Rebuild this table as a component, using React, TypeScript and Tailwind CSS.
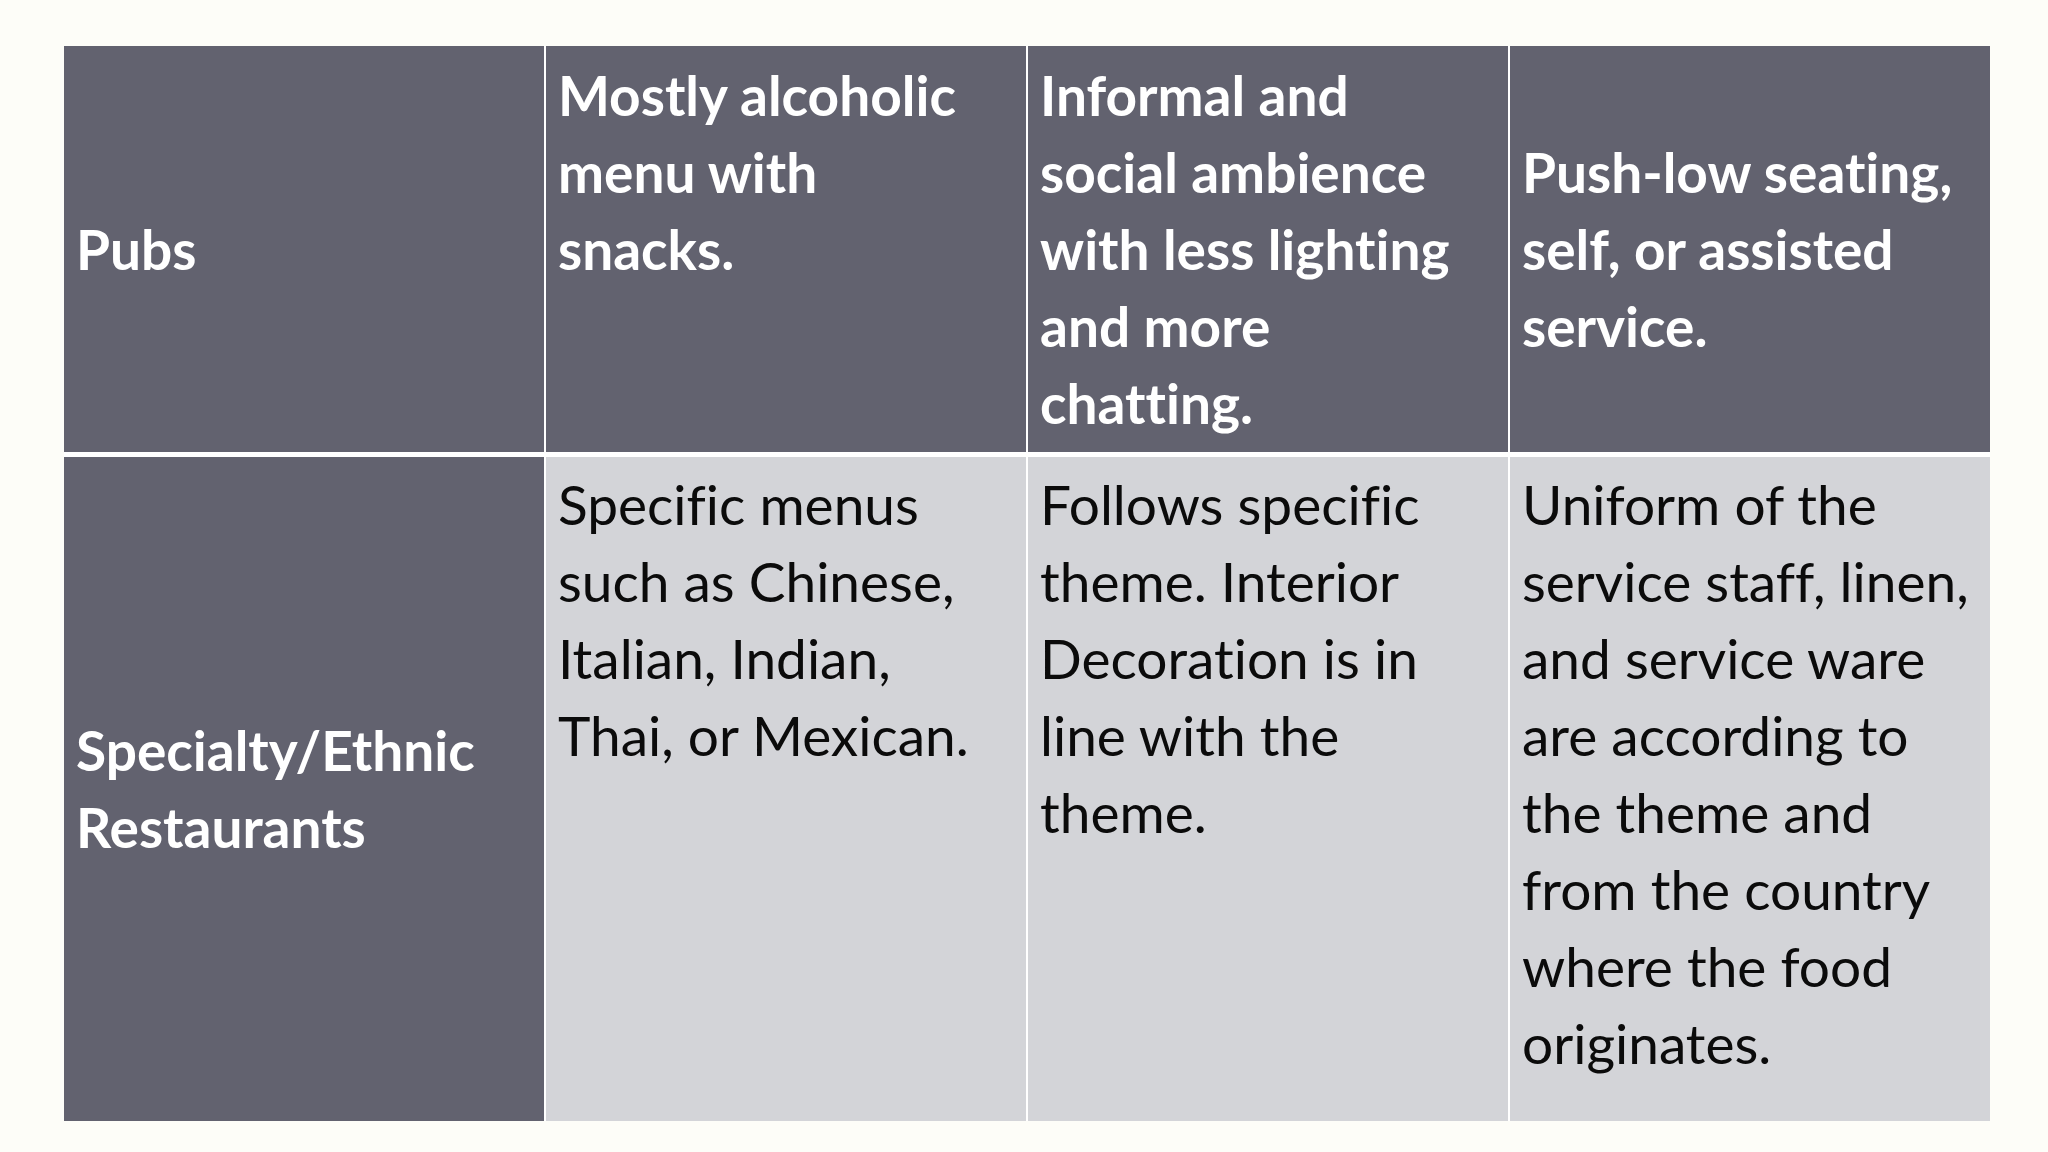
import React from "react"

type Align = "top" | "middle"

interface Cell {
  lines: string[]
  align: Align
  dark: boolean
}

const rows: Cell[][] = [
  [
    { lines: ["Pubs"], align: "middle", dark: true },
    { lines: ["Mostly alcoholic", "menu with", "snacks."], align: "top", dark: true },
    {
      lines: ["Informal and", "social ambience", "with less lighting", "and more", "chatting."],
      align: "top",
      dark: true,
    },
    { lines: ["Push-low seating,", "self, or assisted", "service."], align: "middle", dark: true },
  ],
  [
    { lines: ["Specialty/Ethnic", "Restaurants"], align: "middle", dark: true },
    {
      lines: ["Specific menus", "such as Chinese,", "Italian, Indian,", "Thai, or Mexican."],
      align: "top",
      dark: false,
    },
    {
      lines: ["Follows specific", "theme. Interior", "Decoration is in", "line with the", "theme."],
      align: "top",
      dark: false,
    },
    {
      lines: [
        "Uniform of the",
        "service staff, linen,",
        "and service ware",
        "are according to",
        "the theme and",
        "from the country",
        "where the food",
        "originates.",
      ],
      align: "top",
      dark: false,
    },
  ],
]

function TableCell({ cell, header }: { cell: Cell; header: boolean }) {
  const top = cell.align === "middle"
  return (
    <div
      className={
        "flex flex-col pl-[12px] pr-[8px] " +
        (top ? "justify-center pt-0 " : header ? "justify-start pt-[11px] " : "justify-start pt-[9px] ") +
        (cell.dark ? "bg-[#62626f] text-white font-bold" : "bg-[#d3d4d8] text-[#0b0b0b] font-normal")
      }
    >
      <p className="text-[55px] leading-[77px] whitespace-nowrap [font-variant-ligatures:none]">
        {cell.lines.map((line, i) => (
          <React.Fragment key={i}>
            {line}
            {i < cell.lines.length - 1 && <br />}
          </React.Fragment>
        ))}
      </p>
    </div>
  )
}

export default function App() {
  return (
    <main
      className="min-h-screen bg-[#fdfdf8] pl-[64px] pt-[46px]"
      style={{ fontFamily: "Lato, 'Open Sans', sans-serif" }}
    >
      <div className="grid w-[1926px] grid-cols-4 grid-rows-[406px_664px] gap-x-[2px] gap-y-[5px] bg-white">
        {rows.map((row, r) =>
          row.map((cell, c) => <TableCell key={`${r}-${c}`} cell={cell} header={r === 0} />)
        )}
      </div>
    </main>
  )
}
